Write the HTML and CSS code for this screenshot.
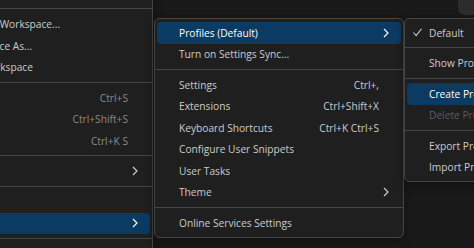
FILE: index.html
```html
<!DOCTYPE html>
<html>
<head>
<meta charset="utf-8">
<link rel="stylesheet" href="styles.css">
</head>
<body>
<div class="stage">
  <div class="corner"></div>

  <div class="menu menu-file">
    <div class="item"><span class="label">Open Recent</span><svg class="chev" viewBox="0 0 6 10"><polyline points="1,1 5,5 1,9"/></svg></div>
    <div class="sep"></div>
    <div class="item"><span class="label">Add Folder to Workspace...</span></div>
    <div class="item"><span class="label">Save Workspace As...</span></div>
    <div class="item"><span class="label">Duplicate Workspace</span></div>
    <div class="sep"></div>
    <div class="item dim"><span class="label">Save</span><span class="key">Ctrl+S</span></div>
    <div class="item dim"><span class="label">Save As...</span><span class="key">Ctrl+Shift+S</span></div>
    <div class="item dim"><span class="label">Save All</span><span class="key">Ctrl+K S</span></div>
    <div class="sep"></div>
    <div class="item"><span class="label">Share</span><svg class="chev" viewBox="0 0 6 10"><polyline points="1,1 5,5 1,9"/></svg></div>
    <div class="sep"></div>
    <div class="item"><span class="label">Auto Save</span></div>
    <div class="item active"><span class="label">Preferences</span><svg class="chev" viewBox="0 0 6 10"><polyline points="1,1 5,5 1,9"/></svg></div>
    <div class="sep"></div>
    <div class="item"><span class="label">Revert File</span></div>
  </div>

  <div class="menu menu-prefs">
    <div class="item active"><span class="label">Profiles (Default)</span><svg class="chev" viewBox="0 0 6 10"><polyline points="1,1 5,5 1,9"/></svg></div>
    <div class="item"><span class="label">Turn on Settings Sync...</span></div>
    <div class="sep"></div>
    <div class="item"><span class="label">Settings</span><span class="key">Ctrl+,</span></div>
    <div class="item"><span class="label">Extensions</span><span class="key">Ctrl+Shift+X</span></div>
    <div class="item"><span class="label">Keyboard Shortcuts</span><span class="key">Ctrl+K Ctrl+S</span></div>
    <div class="item"><span class="label">Configure User Snippets</span></div>
    <div class="item"><span class="label">User Tasks</span></div>
    <div class="item"><span class="label">Theme</span><svg class="chev" viewBox="0 0 6 10"><polyline points="1,1 5,5 1,9"/></svg></div>
    <div class="sep"></div>
    <div class="item"><span class="label">Online Services Settings</span></div>
  </div>

  <div class="menu menu-profiles">
    <div class="item"><svg class="check" viewBox="0 0 10 10"><polyline points="0.5,5 3.5,8.5 9.5,0.8"/></svg><span class="label">Default</span></div>
    <div class="sep"></div>
    <div class="item"><span class="label">Show Profile Contents</span></div>
    <div class="sep"></div>
    <div class="item active"><span class="label">Create Profile...</span></div>
    <div class="item disabled"><span class="label">Delete Profile...</span></div>
    <div class="sep"></div>
    <div class="item"><span class="label">Export Profile...</span></div>
    <div class="item"><span class="label">Import Profile...</span></div>
  </div>
</div>
</body>
</html>
```

FILE: styles.css
```css
html, body {
  margin: 0;
  padding: 0;
  background: #191919;
  overflow: hidden;
}

.stage {
  position: relative;
  width: 474px;
  height: 248px;
  overflow: hidden;
  display: flex;
  align-items: flex-start;
  font-family: "Open Sans", "Noto Sans", sans-serif;
  font-size: 10.2px;
  color: #cccccc;
}

.corner {
  position: absolute;
  right: -8px;
  top: -10px;
  width: 24px;
  height: 25px;
  border-radius: 7px;
  background: #2c2c2c;
}

.menu {
  box-sizing: border-box;
  flex: none;
  display: flex;
  flex-direction: column;
  padding: 3px 0;
  background: #1f1f1f;
  border: 1px solid #454545;
  border-radius: 5px;
  box-shadow: 0 2px 8px rgba(0, 0, 0, 0.4);
}

.menu-file {
  width: 245px;
  margin-left: -92px;
  margin-top: -21px;
  height: 300px;
}

.menu-prefs {
  width: 250px;
  margin-left: 1px;
  margin-top: 18px;
}

.menu-profiles {
  width: 200px;
  margin-top: 18px;
}

.item {
  display: flex;
  align-items: center;
  height: 21.5px;
  margin: 0 2px;
  padding-left: 22px;
  border-radius: 4px;
  white-space: nowrap;
}

.item .label {
  flex: 1;
}

.item.active {
  background: #0b3a63;
  color: #ffffff;
}

.item.dim {
  color: #8b8b8b;
}

.item.disabled {
  color: #5c5c5c;
}

.key {
  margin-right: 22px;
}

.chev {
  width: 6px;
  height: 10px;
  margin-right: 12px;
  fill: none;
  stroke: #cccccc;
  stroke-width: 1.2;
}

.item.active .chev {
  stroke: #ffffff;
}

.item .check {
  width: 9px;
  height: 9px;
  margin-left: -16px;
  margin-right: 7px;
  fill: none;
  stroke: #cccccc;
  stroke-width: 1.2;
}

.sep {
  flex: none;
  height: 1px;
  margin: 3.5px 0 4.5px;
  background: #454545;
}
```
